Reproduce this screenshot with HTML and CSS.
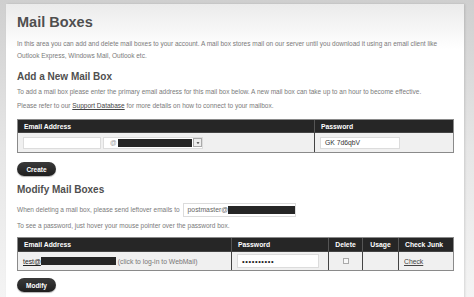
FILE: index.html
```html
<!DOCTYPE html>
<html>
<head>
<meta charset="utf-8">
<link rel="stylesheet" href="styles.css">
</head>
<body>
<div class="panel">
  <h1 class="title">Mail Boxes</h1>
  <p class="intro">In this area you can add and delete mail boxes to your account. A mail box stores mail on our server until you download it using an email client like Outlook Express, Windows Mail, Outlook etc.</p>

  <h2 class="sub sub-add">Add a New Mail Box</h2>
  <p class="line line-a">To add a mail box please enter the primary email address for this mail box below. A new mail box can take up to an hour to become effective.</p>
  <p class="line line-b">Please refer to our <a class="lnk" href="#">Support Database</a> for more details on how to connect to your mailbox.</p>

  <div class="tbl tbl-new">
    <div class="thead h1row">
      <div class="th c-email1">Email Address</div>
      <div class="th c-pass1 sep">Password</div>
    </div>
    <div class="trow r1">
      <div class="td c-email1">
        <span class="inp inp-user"></span>
        <span class="sel"><span class="at">@</span><span class="redact sel-bar"></span><span class="arrow"><svg width="6" height="6" viewBox="0 0 6 6"><path d="M1.5 2.2h3L3 4z" fill="#333"/></svg></span></span>
      </div>
      <div class="td c-pass1 sep"><span class="inp inp-pass">GK 7d6qbV</span></div>
    </div>
  </div>

  <div class="btnwrap btn-create"><span class="btn">Create</span></div>

  <h2 class="sub sub-mod">Modify Mail Boxes</h2>
  <p class="line line-c">When deleting a mail box, please send leftover emails to <span class="inp inp-post">postmaster@<span class="redact post-bar"></span></span></p>
  <p class="line line-d">To see a password, just hover your mouse pointer over the password box.</p>

  <div class="tbl tbl-mod">
    <div class="thead h2row">
      <div class="th c-email2">Email Address</div>
      <div class="th c-pass2 sep">Password</div>
      <div class="th c-del sep ctr">Delete</div>
      <div class="th c-use sep ctr">Usage</div>
      <div class="th c-junk sep">Check Junk</div>
    </div>
    <div class="trow r2">
      <div class="td c-email2"><a class="lnk dark" href="#">test@</a><span class="redact mail-bar"></span><span class="hint">(click to log-in to WebMail)</span></div>
      <div class="td c-pass2 sep"><span class="inp inp-pw">&#8226;&#8226;&#8226;&#8226;&#8226;&#8226;&#8226;&#8226;&#8226;&#8226;</span></div>
      <div class="td c-del sep ctr"><span class="chk"></span></div>
      <div class="td c-use sep"></div>
      <div class="td c-junk sep"><a class="lnk" href="#">Check</a></div>
    </div>
  </div>

  <div class="btnwrap btn-modify"><span class="btn">Modify</span></div>
</div>
</body>
</html>
```

FILE: styles.css
```css
* { box-sizing: border-box; }
html, body { height: 100%; }
body {
  margin: 0;
  font-family: "Liberation Sans", Arial, sans-serif;
  background: linear-gradient(#cfcfcf 0%, #e6e6e6 50%, #f4f4f4 100%);
  overflow: hidden;
}
.panel {
  margin: 4px 0 0 6px;
  width: 458px;
  height: 300px;
  padding: 10px 0 0 11px;
  background: linear-gradient(#ebebeb 0px, #ffffff 45px);
  box-shadow: 1px 0 2px rgba(0,0,0,0.12);
}
.title {
  margin: 0;
  font-size: 14.5px;
  line-height: 16px;
  font-weight: bold;
  color: #4f4f4f;
}
.intro {
  margin: 8px 0 0;
  width: 432px;
  font-size: 6.5px;
  line-height: 12px;
  color: #7a7a7a;
}
.sub {
  margin: 9px 0 0;
  font-size: 10px;
  line-height: 12px;
  font-weight: bold;
  color: #4f4f4f;
}
.sub-mod { margin-top: 8px; }
.line {
  margin: 3px 0 0;
  font-size: 6.5px;
  line-height: 12px;
  color: #7a7a7a;
  white-space: nowrap;
}
.line-b { margin-top: 2px; }
.line-c {
  margin-top: 7px;
  line-height: 14px;
  height: 14px;
  display: flex;
  align-items: center;
}
.line-d { margin-top: 3px; }
.lnk { color: #444; text-decoration: underline; }
.lnk.dark { color: #222; }

.tbl {
  width: 437px;
  border: 1px solid #8a8a8a;
  font-size: 6.8px;
}
.tbl-new { margin-top: 7px; }
.tbl-mod { margin-top: 5px; }
.thead {
  display: flex;
  background: #262626;
  color: #fff;
  font-weight: bold;
}
.h1row { height: 12px; }
.h2row { height: 13px; }
.th {
  padding-left: 6px;
  display: flex;
  align-items: center;
}
.thead .sep { border-left: 1px solid #555; }
.trow {
  display: flex;
  background: #f0f0f0;
  border-top: 1px solid #444;
}
.r1 { height: 20px; }
.r2 { height: 19px; }
.td {
  display: flex;
  align-items: center;
  padding-left: 5px;
  color: #777;
}
.trow .sep { border-left: 1px solid #444; }
.ctr { justify-content: center; padding-left: 0; text-align: center; }

.c-email1 { width: 296px; }
.c-pass1 { flex: 1; }
.c-email2 { width: 213px; }
.c-pass2 { width: 97px; }
.c-del { width: 34px; }
.c-use { width: 36px; }
.c-junk { flex: 1; }

.inp {
  display: inline-flex;
  align-items: center;
  height: 12px;
  background: #fff;
  border: 1px solid #dcdcdc;
  color: #333;
  font-size: 6.8px;
  padding-left: 4px;
}
.inp-user { width: 78px; }
.inp-pass { width: 80px; }
.inp-pw { width: 82px; height: 14px; letter-spacing: 0.6px; color: #222; font-size: 7.5px; }
.inp-post { width: 113px; height: 14px; margin-left: 3px; color: #666; }
.sel {
  display: inline-flex;
  align-items: center;
  margin-left: 2px;
  width: 100px;
  height: 12px;
  background: #fff;
  border: 1px solid #dcdcdc;
  padding-left: 6px;
}
.at { color: #999; font-size: 6.5px; }
.redact { display: inline-block; background: #262626; }
.sel-bar { width: 75px; height: 8px; margin-left: 1px; }
.arrow {
  display: inline-flex;
  align-items: center;
  justify-content: center;
  width: 9px;
  height: 9px;
  margin-left: 1px;
  border: 1px solid #aaa;
  background: #eee;
}
.post-bar { width: 68px; height: 8px; }
.mail-bar { width: 75px; height: 8px; }
.hint { margin-left: 2px; color: #777; }
.chk {
  width: 6px;
  height: 6px;
  border: 1px solid #aaa;
  background: #f8f8f8;
}

.btnwrap { display: flex; }
.btn-create { margin-top: 9px; }
.btn-modify { margin-top: 7px; }
.btn {
  display: inline-flex;
  align-items: center;
  justify-content: center;
  width: 39px;
  height: 14px;
  border-radius: 7px;
  background: linear-gradient(#3a3a3a, #1e1e1e);
  color: #fff;
  font-size: 6.5px;
  font-weight: bold;
  box-shadow: 0 1px 1px rgba(0,0,0,0.3);
}
```
